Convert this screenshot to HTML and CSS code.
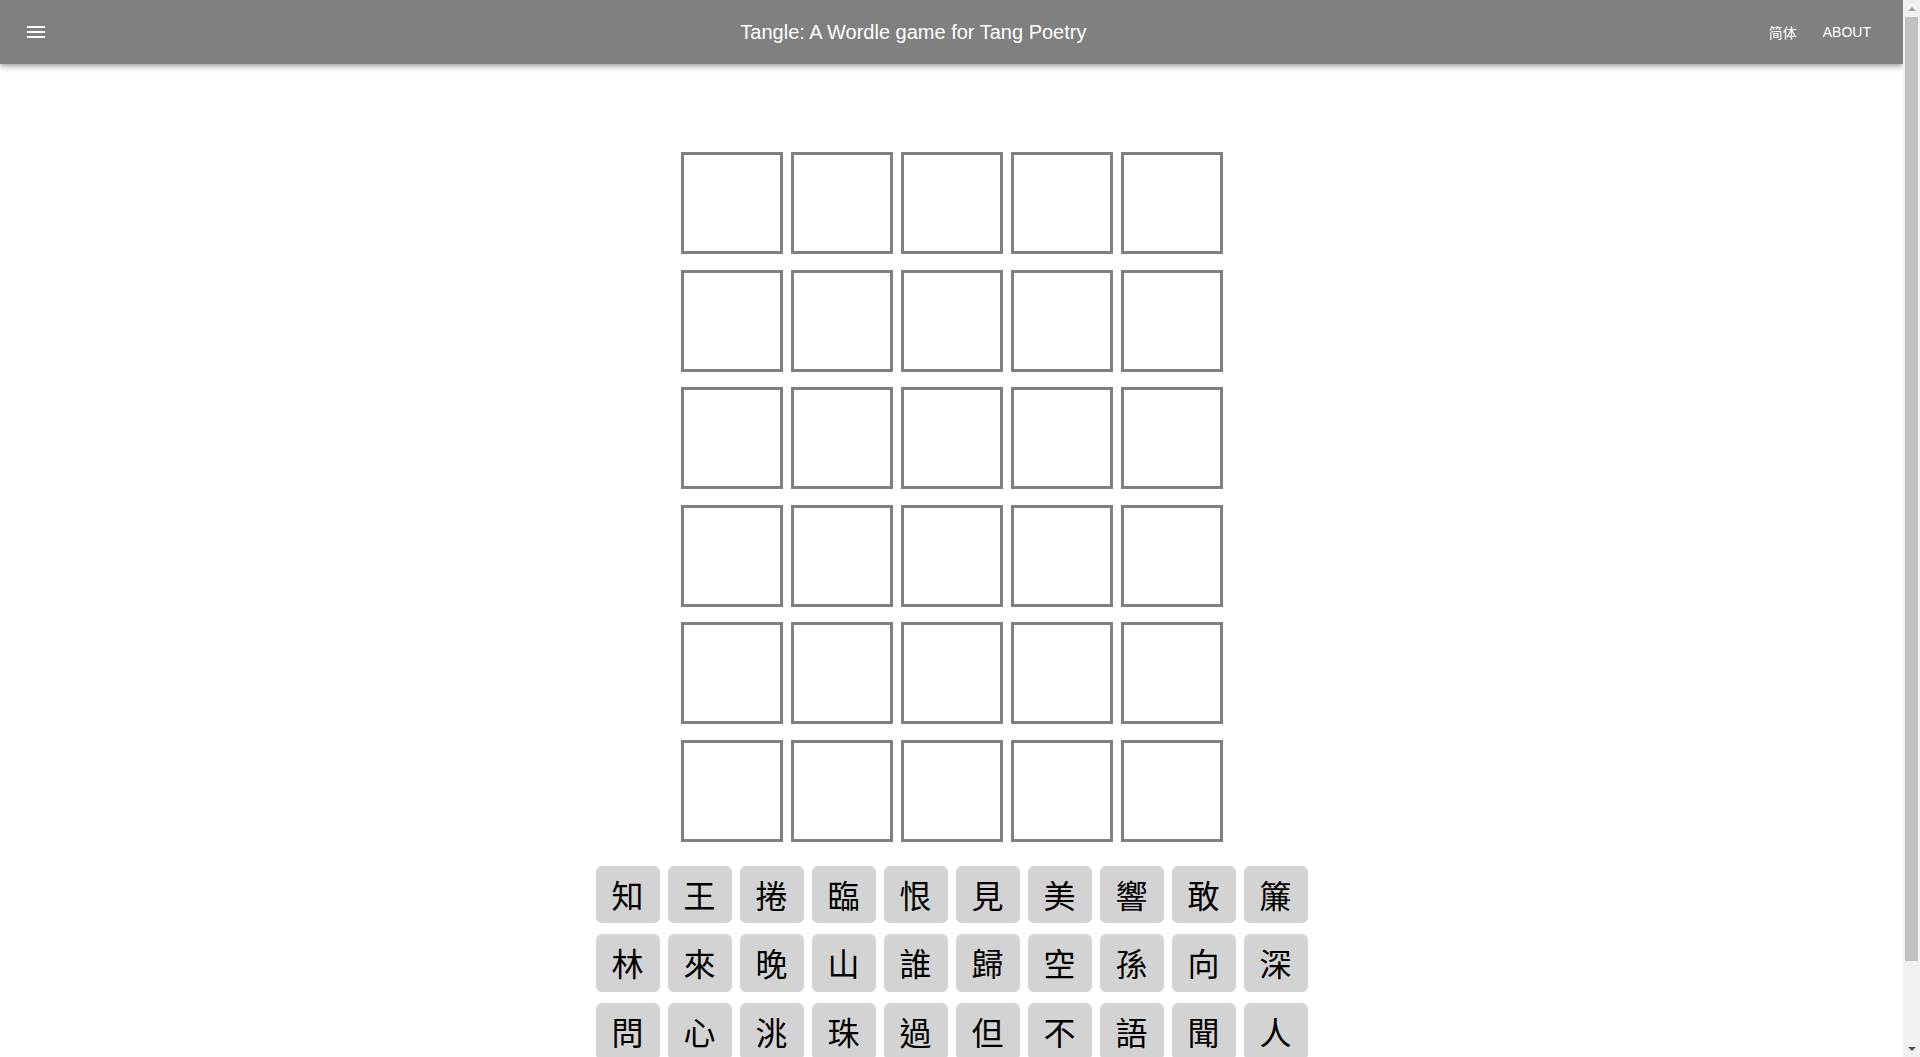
FILE: index.html
```html
<!DOCTYPE html>
<html lang="zh-Hant">
<head>
<meta charset="utf-8">
<title>Tangle</title>
<link rel="stylesheet" href="styles.css">
</head>
<body>
<div class="app">
<div class="page">
<header class="appbar">
  <div class="toolbar">
    <button class="icon-btn" aria-label="menu">
      <svg viewBox="0 0 24 24" width="24" height="24"><path fill="#fff" d="M3 18h18v-2H3v2zm0-5h18v-2H3v2zm0-7v2h18V6H3z"/></svg>
    </button>
    <div class="title">Tangle: A Wordle game for Tang Poetry</div>
    <button class="text-btn cjk">简体</button>
    <button class="text-btn">ABOUT</button>
  </div>
</header>
<main class="main">
  <div class="grid">
    <div class="tile"></div><div class="tile"></div><div class="tile"></div><div class="tile"></div><div class="tile"></div>
    <div class="tile"></div><div class="tile"></div><div class="tile"></div><div class="tile"></div><div class="tile"></div>
    <div class="tile"></div><div class="tile"></div><div class="tile"></div><div class="tile"></div><div class="tile"></div>
    <div class="tile"></div><div class="tile"></div><div class="tile"></div><div class="tile"></div><div class="tile"></div>
    <div class="tile"></div><div class="tile"></div><div class="tile"></div><div class="tile"></div><div class="tile"></div>
    <div class="tile"></div><div class="tile"></div><div class="tile"></div><div class="tile"></div><div class="tile"></div>
  </div>
  <div class="keyboard">
    <button class="key">知</button><button class="key">王</button><button class="key">捲</button><button class="key">臨</button><button class="key">恨</button><button class="key">見</button><button class="key">美</button><button class="key">響</button><button class="key">敢</button><button class="key">簾</button>
    <button class="key">林</button><button class="key">來</button><button class="key">晚</button><button class="key">山</button><button class="key">誰</button><button class="key">歸</button><button class="key">空</button><button class="key">孫</button><button class="key">向</button><button class="key">深</button>
    <button class="key">問</button><button class="key">心</button><button class="key">洮</button><button class="key">珠</button><button class="key">過</button><button class="key">但</button><button class="key">不</button><button class="key">語</button><button class="key">聞</button><button class="key">人</button>
  </div>
</main>
</div>
<div class="scrollbar" aria-hidden="true">
  <div class="sb-btn"><span class="arrow-up"></span></div>
  <div class="sb-track"><div class="sb-thumb"></div></div>
  <div class="sb-btn"><span class="arrow-down"></span></div>
</div>
</div>
</body>
</html>
```
FILE: styles.css
```css
html, body {
  margin: 0;
  padding: 0;
  height: 100%;
  overflow: hidden;
  background: #ffffff;
}
body {
  font-family: "Liberation Sans", Arial, "Noto Sans CJK TC", sans-serif;
}
.app {
  display: flex;
  height: 100vh;
}
.page {
  flex: 1;
  min-width: 0;
  overflow: hidden;
}
.scrollbar {
  width: 17px;
  flex: none;
  background: #f1f1f1;
  display: flex;
  flex-direction: column;
}
.sb-btn {
  height: 17px;
  flex: none;
  display: flex;
  align-items: center;
  justify-content: center;
}
.arrow-up {
  width: 0;
  height: 0;
  border-left: 4px solid transparent;
  border-right: 4px solid transparent;
  border-bottom: 4px solid #a3a3a3;
}
.arrow-down {
  width: 0;
  height: 0;
  border-left: 4px solid transparent;
  border-right: 4px solid transparent;
  border-top: 4px solid #505050;
}
.sb-track {
  flex: 1;
  padding: 0 2px;
}
.sb-thumb {
  height: 944px;
  background: #c1c1c1;
}
.appbar {
  position: relative;
  z-index: 2;
  background: #808080;
  color: #ffffff;
  box-shadow: 0px 2px 4px -1px rgba(0,0,0,0.2), 0px 4px 5px 0px rgba(0,0,0,0.14), 0px 1px 10px 0px rgba(0,0,0,0.12);
}
.toolbar {
  height: 64px;
  display: flex;
  align-items: center;
  padding: 0 24px;
}
.icon-btn {
  width: 48px;
  height: 48px;
  margin-left: -12px;
  margin-right: 16px;
  padding: 12px;
  border: 0;
  background: transparent;
  display: flex;
  align-items: center;
  justify-content: center;
}
.title {
  flex: 1;
  text-align: center;
  font-size: 20px;
  line-height: 1.6;
  font-family: "Liberation Sans", Arial, sans-serif;
  padding-bottom: 1px;
}
.text-btn {
  min-width: 64px;
  padding: 6px 8px;
  border: 0;
  background: transparent;
  color: #ffffff;
  font-family: "Liberation Sans", Arial, "Noto Sans CJK SC", sans-serif;
  font-size: 14px;
  line-height: 24px;
  text-transform: uppercase;
}
.text-btn.cjk {
  font-family: "Noto Sans CJK SC", sans-serif;
}
.main {
  display: flex;
  flex-direction: column;
  align-items: center;
  padding-top: 88px;
  padding-bottom: 84px;
}
.grid {
  display: grid;
  grid-template-columns: repeat(5, 102px);
  grid-auto-rows: 102px;
  column-gap: 8px;
  row-gap: 15.6px;
}
.tile {
  box-sizing: border-box;
  border: 3px solid #808080;
}
.keyboard {
  margin-top: 24px;
  display: grid;
  grid-template-columns: repeat(10, 64px);
  grid-auto-rows: 57.5px;
  column-gap: 8px;
  row-gap: 11px;
}
.key {
  border: 0;
  border-radius: 6px;
  background: #d3d3d3;
  color: #000000;
  font-family: "Noto Sans CJK TC", sans-serif;
  font-size: 32px;
  line-height: 1;
  padding: 0 0 2px 0;
  display: flex;
  align-items: center;
  justify-content: center;
}
```
